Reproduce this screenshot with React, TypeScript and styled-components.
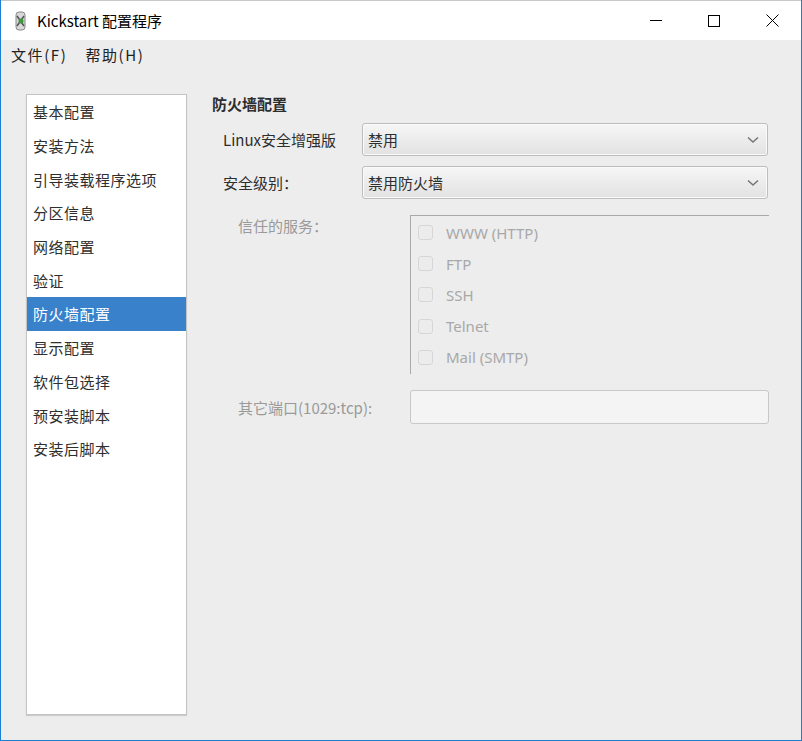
import React from "react";
import styled, { createGlobalStyle } from "styled-components";

const Global = createGlobalStyle`
  html, body { margin: 0; padding: 0; background: #fff; }
  body { font-family: "Noto Sans CJK SC", "Noto Sans", sans-serif; }
`;

const Window = styled.div`
  width: 802px; height: 741px; box-sizing: border-box;
  border: 1px solid #1b7fd4; border-top: none;
  display: flex; flex-direction: column; background: #ededed;
`;
const TitleBar = styled.div`
  height: 40px; box-sizing: border-box; background: #fff; display: flex; align-items: center;
  border-top: 1px solid #c8c8c8;
  padding-left: 12px; font-size: 15px; color: #000;
  font-family: "Noto Sans CJK SC", sans-serif;
`;
const TitleText = styled.span` margin-left: 8px; flex: 1; `;
const WinBtn = styled.div`
  width: 58px; height: 40px; display: flex; align-items: center; justify-content: center;
`;
const MenuBar = styled.div`
  height: 28px; display: flex; align-items: center; gap: 18px; padding-left: 10px;
  font-size: 15px; color: #222; letter-spacing: 1.6px;
`;
const Body = styled.div`
  display: flex; padding: 26px 0 0 25px; gap: 25px; flex: 1;
`;
const SideList = styled.div`
  width: 159px; height: 619px; background: #fff; border: 1px solid #c4c4c4;
  box-shadow: 0 1px 1px #ccc; display: flex; flex-direction: column;
`;
const SideItem = styled.div<{ $sel?: boolean }>`
  height: 33.7px; display: flex; align-items: center; padding-left: 6px;
  font-size: 15px; letter-spacing: 0.5px;
  background: ${p => (p.$sel ? "#3a81cc" : "transparent")};
  color: ${p => (p.$sel ? "#fff" : "#2e2e2e")};
`;
const Main = styled.div` flex: 1; display: flex; flex-direction: column; `;
const Heading = styled.div`
  font-size: 15px; font-weight: bold; color: #2e2e2e; margin-top: -1px; height: 22px;
`;
const FormRow = styled.div<{ $mt: number }>`
  display: flex; align-items: center; margin-top: ${p => p.$mt}px;
`;
const Label = styled.div<{ $w: number; $pl: number; $dim?: boolean }>`
  width: ${p => p.$w}px; padding-left: ${p => p.$pl}px; box-sizing: border-box;
  font-size: 15px; color: ${p => (p.$dim ? "#9a9a9a" : "#2e2e2e")};
`;
const Select = styled.div`
  width: 406px; height: 33px; box-sizing: border-box;
  border: 1px solid #bdbdbd; border-radius: 3px;
  background: linear-gradient(#f6f6f6, #e2e2e2);
  box-shadow: inset 0 0 0 1px #fafafa;
  display: flex; align-items: center; justify-content: space-between;
  padding: 0 8px 0 5px; font-size: 15px; color: #2e2e2e;
`;
const ServicesRow = styled.div` display: flex; margin-top: 16px; `;
const Frame = styled.div`
  width: 359px; height: 159px; box-sizing: border-box;
  border-top: 1px solid #a9a9a9; border-left: 1px solid #a9a9a9;
  padding: 1px 0 0 7px; display: flex; flex-direction: column;
`;
const Check = styled.div`
  height: 31.2px; display: flex; align-items: center; gap: 13px;
  font-family: "Noto Sans", sans-serif; font-size: 15px; color: #a8a8a8;
`;
const Box = styled.span`
  width: 13px; height: 13px; border: 1px solid #d6d6d6; border-radius: 3px; background: #ececec;
`;
const Input = styled.div`
  width: 359px; height: 34px; box-sizing: border-box;
  border: 1px solid #c8c8c8; border-radius: 3px; background: #f4f4f4;
`;

const Chevron = () => (
  <svg width="12" height="8" viewBox="0 0 12 8"><path d="M1 1.5 L6 6 L11 1.5" fill="none" stroke="#777" strokeWidth="1.6"/></svg>
);

const Logo = () => (
  <svg width="16" height="20" viewBox="0 0 16 20">
    <rect x="3" y="1" width="9" height="18" rx="3" fill="#d8d8d8" stroke="#888" />
    <path d="M4 5 L11 15 M11 5 L4 15" stroke="#555" strokeWidth="1.5"/>
    <circle cx="8" cy="10" r="2.5" fill="#3c9a3c"/>
  </svg>
);

const items = ["基本配置","安装方法","引导装载程序选项","分区信息","网络配置","验证","防火墙配置","显示配置","软件包选择","预安装脚本","安装后脚本"];
const services = ["WWW (HTTP)","FTP","SSH","Telnet","Mail (SMTP)"];

export default function App() {
  return (
    <>
      <Global />
      <Window>
        <TitleBar>
          <Logo />
          <TitleText>Kickstart 配置程序</TitleText>
          <WinBtn><svg width="12" height="2"><rect width="12" height="1" fill="#000"/></svg></WinBtn>
          <WinBtn><svg width="12" height="12"><rect x="0.5" y="0.5" width="11" height="11" fill="none" stroke="#000"/></svg></WinBtn>
          <WinBtn><svg width="13" height="13"><path d="M0.5 0.5 L12.5 12.5 M12.5 0.5 L0.5 12.5" stroke="#000"/></svg></WinBtn>
        </TitleBar>
        <MenuBar><span>文件(F)</span><span>帮助(H)</span></MenuBar>
        <Body>
          <SideList>
            {items.map(t => <SideItem key={t} $sel={t === "防火墙配置"}>{t}</SideItem>)}
          </SideList>
          <Main>
            <Heading>防火墙配置</Heading>
            <FormRow $mt={8}><Label $w={150} $pl={11}>Linux安全增强版</Label><Select>禁用<Chevron/></Select></FormRow>
            <FormRow $mt={10}><Label $w={150} $pl={11}>安全级别：</Label><Select>禁用防火墙<Chevron/></Select></FormRow>
            <ServicesRow>
              <Label $w={198} $pl={26} $dim>信任的服务：</Label>
              <Frame>
                {services.map(s => <Check key={s}><Box />{s}</Check>)}
              </Frame>
            </ServicesRow>
            <FormRow $mt={16}><Label $w={198} $pl={26} $dim>其它端口(1029:tcp):</Label><Input /></FormRow>
          </Main>
        </Body>
      </Window>
    </>
  );
}
